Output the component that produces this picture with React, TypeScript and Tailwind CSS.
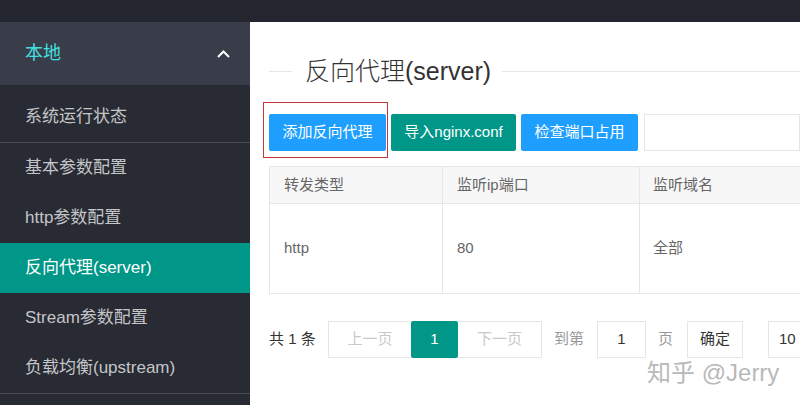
const font = "font-['Liberation_Sans','Noto_Sans_CJK_SC',sans-serif]";

const menu = [
  "系统运行状态",
  "基本参数配置",
  "http参数配置",
  "反向代理(server)",
  "Stream参数配置",
  "负载均衡(upstream)",
];

function Sidebar() {
  return (
    <aside className="w-[250px] shrink-0 bg-[#282b33]">
      <div className="flex h-[63px] items-center justify-between bg-[#393d49] pl-[25px] pr-[20px]">
        <span className="text-[18px] text-[#45e0e0]">本地</span>
        <svg width="13" height="8" viewBox="0 0 13 8" fill="none">
          <path d="M1 7L6.5 1.5L12 7" stroke="#ffffff" strokeWidth="2" />
        </svg>
      </div>
      <ul className="pt-[7px]">
        {menu.map((item, i) => {
          const active = i === 3;
          const line = i === 0 || i === menu.length - 1;
          return (
            <li
              key={item}
              className={`flex items-center pl-[25px] text-[17px] ${
                line ? "h-[51px] border-b border-[#4b4e56]" : "h-[50px]"
              } ${active ? "bg-[#009688] text-white" : "text-[#c4c5c8]"}`}
            >
              {item}
            </li>
          );
        })}
      </ul>
    </aside>
  );
}

function Toolbar() {
  return (
    <div className="mt-[26px] flex h-[37px] items-stretch gap-[5px] text-[15px] text-white">
      <div className="relative flex shrink-0">
        <button className="w-[117px] rounded-[2px] bg-[#1e9fff]">添加反向代理</button>
        <div className="pointer-events-none absolute -bottom-[7px] -left-[6px] -right-[2px] -top-[12px] border border-[#c7373a]" />
      </div>
      <button className="w-[125px] shrink-0 rounded-[2px] bg-[#009688]">导入nginx.conf</button>
      <button className="w-[117px] shrink-0 rounded-[2px] bg-[#1e9fff]">检查端口占用</button>
      <input className="ml-[1px] min-w-0 flex-1 border border-[#e6e6e6] bg-white outline-none" />
    </div>
  );
}

function Table() {
  return (
    <div className="mt-[15px] w-[560px] text-[15px] text-[#666]">
      <div className="flex h-[38px] border border-[#e6e6e6] bg-[#f7f7f7]">
        <div className="flex w-[173px] items-center border-r border-[#e6e6e6] pl-[14px]">转发类型</div>
        <div className="flex w-[197px] items-center border-r border-[#e6e6e6] pl-[14px]">监听ip端口</div>
        <div className="flex flex-1 items-center pl-[13px]">监听域名</div>
      </div>
      <div className="flex h-[90px] border border-t-0 border-[#e6e6e6]">
        <div className="flex w-[173px] items-center border-r border-[#e6e6e6] pl-[14px]">http</div>
        <div className="flex w-[197px] items-center border-r border-[#e6e6e6] pl-[14px]">80</div>
        <div className="flex flex-1 items-center pl-[13px]">全部</div>
      </div>
    </div>
  );
}

function Pager() {
  return (
    <div className="mt-[27px] flex h-[37px] items-stretch whitespace-nowrap text-[15px]">
      <span className="flex w-[59px] shrink-0 items-center text-[#333]">共 1 条</span>
      <span className="flex w-[83px] shrink-0 items-center justify-center border border-r-0 border-[#e6e6e6] text-[#c9c9c9]">上一页</span>
      <span className="flex w-[47px] shrink-0 items-center justify-center rounded-[2px] bg-[#009688] text-white">1</span>
      <span className="flex w-[84px] shrink-0 items-center justify-center border border-l-0 border-[#e6e6e6] text-[#c9c9c9]">下一页</span>
      <span className="ml-[12px] flex shrink-0 items-center text-[#999]">到第</span>
      <span className="ml-[13px] flex w-[49px] shrink-0 items-center justify-center border border-[#e6e6e6] text-[#333]">1</span>
      <span className="ml-[12px] flex shrink-0 items-center text-[#999]">页</span>
      <span className="ml-[14px] flex w-[56px] shrink-0 items-center justify-center border border-[#e6e6e6] text-[#333]">确定</span>
      <span className="ml-[25px] flex w-[100px] shrink-0 items-center border border-[#e6e6e6] pl-[10px] text-[#333]">10 条/页</span>
    </div>
  );
}

export default function App() {
  return (
    <div className={`relative flex h-[405px] w-[800px] flex-col overflow-hidden bg-white ${font}`}>
      <div className="h-[22px] shrink-0 bg-[#23262e]" />
      <div className="flex flex-1">
        <Sidebar />
        <main className="min-w-0 flex-1 overflow-hidden pl-[19px]">
          <div className="mt-[32px] flex h-[34px] items-center">
            <div className="h-px w-[23px] bg-[#e6e6e6]" />
            <h1 className="ml-[13px] text-[25px] font-light leading-none text-[#333]">反向代理(server)</h1>
            <div className="ml-[11px] h-px flex-1 bg-[#e6e6e6]" />
          </div>
          <Toolbar />
          <Table />
          <Pager />
        </main>
      </div>
      <div className="pointer-events-none absolute left-[647px] top-[355px] text-[24px] text-[#b9b9b9] [text-shadow:0_0_2px_#fff]">
        知乎 @Jerry
      </div>
    </div>
  );
}
